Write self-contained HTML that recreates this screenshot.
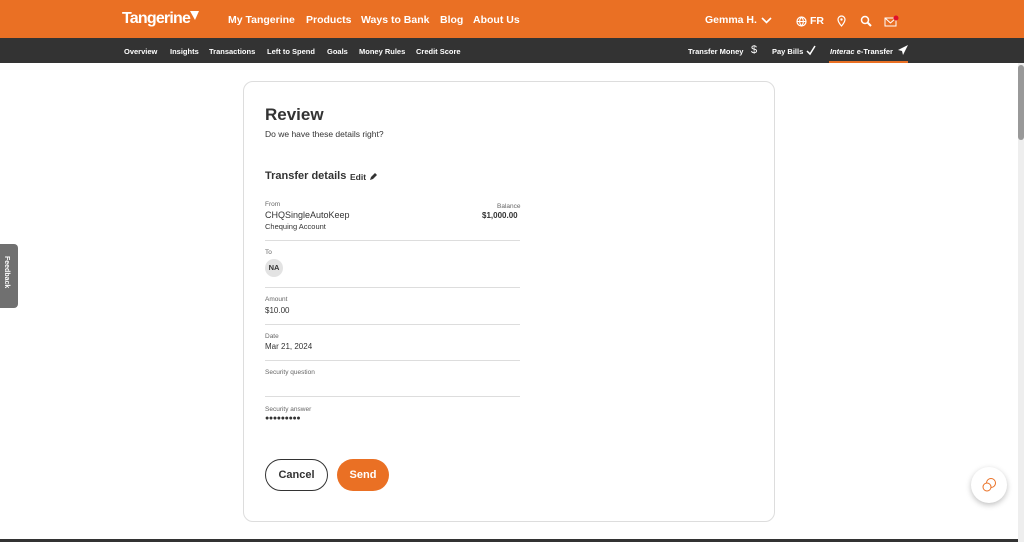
<!DOCTYPE html>
<html><head><style>
*{box-sizing:border-box;margin:0;padding:0}
body{width:1024px;height:542px;overflow:hidden;background:#fff;font-family:"Liberation Sans",sans-serif;color:#333;position:relative}
.top{position:absolute;left:0;top:0;width:1024px;height:38px;background:#ea7024;color:#fff;font-weight:bold}
.top span{position:absolute;top:14px;font-size:10.5px;white-space:nowrap}
.sub{position:absolute;left:0;top:38px;width:1024px;height:25px;background:#333;color:#fff;font-weight:bold;font-size:7.5px}
.sub span{position:absolute;top:9px;white-space:nowrap}
.card{position:absolute;left:243px;top:81px;width:532px;height:441px;border:1px solid #ddd;border-radius:10px}
.a{position:absolute;font-size:8px;color:#333;white-space:nowrap}
.l{position:absolute;font-size:6.5px;color:#666}
.hr{position:absolute;left:265px;width:255px;height:1px;background:#ddd}
.scroll{position:absolute;right:0;top:63px;width:6px;height:479px;background:#eee}
</style></head><body>
<div class="top">
<span style="left:122px;top:10px;font-size:16px;letter-spacing:-0.8px">Tangerine</span>
<svg style="position:absolute;left:190px;top:11px" width="9" height="9"><path d="M0 0H9L5 9Z" fill="#fff"/></svg>
<span style="left:228px">My Tangerine</span>
<span style="left:306px">Products</span>
<span style="left:361px">Ways to Bank</span>
<span style="left:440px">Blog</span>
<span style="left:473px">About Us</span>
<span style="left:705px">Gemma H.</span>
<svg style="position:absolute;left:761px;top:17px" width="11" height="7"><path d="M1 1L5.5 5.5L10 1" stroke="#fff" stroke-width="1.6" fill="none"/></svg>
<svg style="position:absolute;left:796px;top:16px" width="11" height="11"><circle cx="5.5" cy="5.5" r="4.5" stroke="#fff" fill="none" stroke-width="1.2"/><path d="M1 5.5H10M5.5 1C3 4 3 7 5.5 10M5.5 1C8 4 8 7 5.5 10" stroke="#fff" fill="none"/></svg>
<span style="left:810px;top:15px">FR</span>
<svg style="position:absolute;left:837px;top:15px" width="9" height="12"><path d="M4.5 11C1 7 1 5.5 1 4.5A3.5 3.5 0 0 1 8 4.5C8 5.5 8 7 4.5 11Z" stroke="#fff" fill="none" stroke-width="1.2"/><circle cx="4.5" cy="4.5" r="1.2" fill="#fff"/></svg>
<svg style="position:absolute;left:860px;top:15px" width="12" height="12"><circle cx="5" cy="5" r="3.5" stroke="#fff" fill="none" stroke-width="1.5"/><path d="M7.5 7.5L11 11" stroke="#fff" stroke-width="2"/></svg>
<svg style="position:absolute;left:884px;top:15px" width="15" height="12"><rect x="1" y="3" width="11" height="8" stroke="#fff" fill="none"/><path d="M1 3L6.5 8L12 3" stroke="#fff" fill="none"/><circle cx="12" cy="3" r="2.5" fill="#e0102a"/></svg>
</div>
<div class="sub">
<span style="left:124px">Overview</span><span style="left:170px">Insights</span><span style="left:209px">Transactions</span><span style="left:267px">Left to Spend</span><span style="left:327px">Goals</span><span style="left:359px">Money Rules</span><span style="left:416px">Credit Score</span>
<span style="left:688px">Transfer Money</span><span style="left:751px;top:6px;font-size:11px;font-weight:normal">$</span>
<span style="left:772px">Pay Bills</span><svg style="position:absolute;left:806px;top:7px" width="10" height="11"><path d="M1 6L4 9L9 1" stroke="#fff" stroke-width="1.5" fill="none"/></svg>
<span style="left:830px"><i>Interac</i> e-Transfer</span>
<svg style="position:absolute;left:898px;top:7px" width="11" height="10"><path d="M10 0L0 5L4 6L5 10Z" fill="#fff"/></svg>
<div style="position:absolute;left:829px;top:23px;width:79px;height:2px;background:#ea7024"></div>
</div>
<div class="card"></div>
<div class="a" style="left:265px;top:105px;font-size:17px;font-weight:bold;color:#333">Review</div>
<div class="a" style="left:265px;top:129px;font-size:8.5px">Do we have these details right?</div>
<div class="a" style="left:265px;top:170px;font-size:11px;font-weight:bold">Transfer details</div>
<div class="a" style="left:350px;top:172px;font-size:8.5px;font-weight:bold">Edit</div>
<svg style="position:absolute;left:369px;top:172px" width="9" height="9"><path d="M1 8L2 5L6 1L8 3L4 7Z" fill="#333"/></svg>
<div class="l" style="left:265px;top:201px">From</div>
<div class="a" style="left:265px;top:210px;font-size:9px">CHQSingleAutoKeep</div>
<div class="a" style="left:265px;top:222px;font-size:7.5px">Chequing Account</div>
<div class="l" style="left:497px;top:203px">Balance</div>
<div class="a" style="left:482px;top:211px;font-weight:bold">$1,000.00</div>
<div class="hr" style="top:240px"></div>
<div class="l" style="left:265px;top:249px">To</div>
<div style="position:absolute;left:265px;top:259px;width:18px;height:18px;border-radius:50%;background:#e3e3e3;font-size:7.5px;font-weight:bold;text-align:center;line-height:18px">NA</div>
<div class="hr" style="top:287px"></div>
<div class="l" style="left:265px;top:296px">Amount</div>
<div class="a" style="left:265px;top:306px">$10.00</div>
<div class="hr" style="top:324px"></div>
<div class="l" style="left:265px;top:333px">Date</div>
<div class="a" style="left:265px;top:342px">Mar 21, 2024</div>
<div class="hr" style="top:360px"></div>
<div class="l" style="left:265px;top:369px">Security question</div>
<div class="hr" style="top:396px"></div>
<div class="l" style="left:265px;top:406px">Security answer</div>
<div class="a" style="left:265px;top:415px;font-size:7px;letter-spacing:-0.3px">●●●●●●●●●</div>
<div style="position:absolute;left:265px;top:459px;width:63px;height:32px;border:1px solid #333;border-radius:16px;text-align:center;line-height:30px;font-size:11px;font-weight:bold">Cancel</div>
<div style="position:absolute;left:337px;top:459px;width:52px;height:32px;background:#ea7024;border-radius:16px;text-align:center;line-height:32px;font-size:11px;font-weight:bold;color:#fff">Send</div>
<div style="position:absolute;left:0;top:244px;width:18px;height:64px;background:#707070;border-radius:0 4px 4px 0"></div>
<div style="position:absolute;left:3px;top:256px;color:#fff;font-size:7px;font-weight:bold;writing-mode:vertical-rl">Feedback</div>
<div style="position:absolute;left:971px;top:467px;width:36px;height:36px;border-radius:50%;background:#fff;box-shadow:0 2px 6px rgba(0,0,0,.25)"></div>
<svg style="position:absolute;left:980px;top:476px" width="18" height="18"><circle cx="11" cy="7" r="4.5" stroke="#ea7024" fill="none"/><circle cx="7" cy="11" r="4" stroke="#ea7024" fill="#fff"/></svg>
<div class="scroll"><div style="position:absolute;left:0;top:2px;width:6px;height:75px;background:#999;border-radius:3px"></div></div>
<div style="position:absolute;left:0;top:539px;width:1018px;height:3px;background:#333"></div>
</body></html>
